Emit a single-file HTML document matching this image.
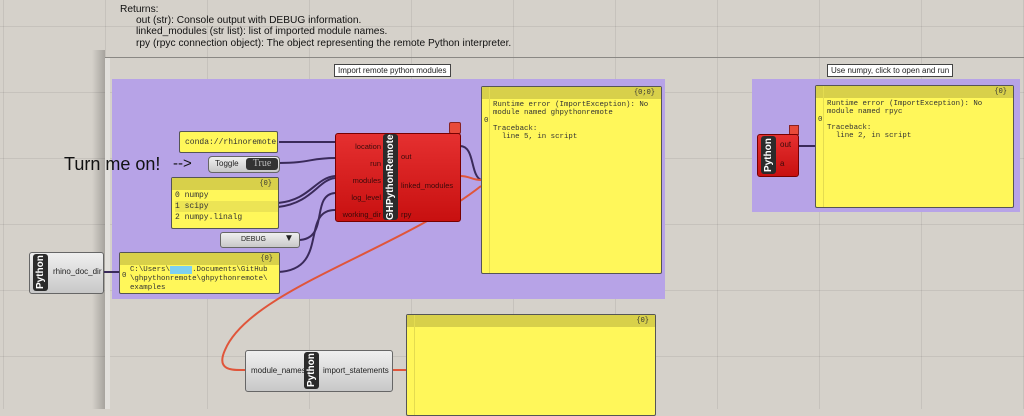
<!DOCTYPE html>
<html><head><style>
body{margin:0;width:1024px;height:409px;overflow:hidden;position:relative;background:#d5d1ca;font-family:"Liberation Sans",sans-serif;}
.abs{position:absolute;}
.grid{position:absolute;left:0;top:0;width:1024px;height:409px;
background-image:linear-gradient(90deg,rgba(0,0,0,.07) 1px,transparent 1px),linear-gradient(rgba(0,0,0,.07) 1px,transparent 1px);
background-size:102px 66px;background-position:3px 26px;}
.grp{position:absolute;background:#b7a3e7;}
.lbl{position:absolute;background:#fff;border:1px solid #444;font-size:8px;color:#222;padding:0 3px;height:11px;line-height:11px;white-space:nowrap}
.pan{position:absolute;background:#fff75a;border:1px solid #555;border-radius:2px;font-family:"Liberation Mono",monospace;font-size:7.4px;color:#333;white-space:nowrap}
.pan .hd{height:12px;background:#d8d04a;text-align:right;padding-right:6px;font-size:7px;line-height:12px}
.pan .gut{position:absolute;left:7px;top:0;bottom:0;border-left:1px solid #e4dc50}
.comp{position:absolute;background:linear-gradient(#efefef,#c8c8c8);border:1px solid #666;border-radius:3px;font-size:8px;color:#222}
.red{background:linear-gradient(#e53030,#c81010);border:1px solid #700;}
.strip{position:absolute;background:#2b2b2b;border-radius:3px;color:#fff;font-weight:bold;font-size:10px;writing-mode:vertical-rl;transform:rotate(180deg);text-align:center}
</style></head><body>
<div class="grid"></div>
<div class="abs" style="left:120px;top:4px;font-size:10.2px;line-height:11.2px;color:#111">Returns:<br>
<span style="padding-left:16px">out (str): Console output with DEBUG information.</span><br>
<span style="padding-left:16px">linked_modules (str list): list of imported module names.</span><br>
<span style="padding-left:16px">rpy (rpyc connection object): The object representing the remote Python interpreter.</span></div>
<div class="abs" style="left:92px;top:50px;width:13px;height:359px;background:linear-gradient(90deg,rgba(0,0,0,0),rgba(0,0,0,.22))"></div>
<div class="abs" style="left:105px;top:57px;width:919px;height:1px;background:#8a8884"></div>
<div class="abs" style="left:105px;top:58px;width:5px;height:351px;background:#e2e0dc"></div>

<div class="grp" style="left:112px;top:79px;width:553px;height:220px"></div>
<div class="lbl" style="left:334px;top:64px">Import remote python modules</div>
<div class="grp" style="left:752px;top:79px;width:268px;height:133px"></div>
<div class="lbl" style="left:827px;top:64px">Use numpy, click to open and run</div>
<div class="abs" style="left:64px;top:154px;font-size:18px;color:#111">Turn me on!</div>
<div class="abs" style="left:173px;top:155px;font-size:15px;color:#111">--&gt;</div>

<svg class="abs" style="left:0;top:0" width="1024" height="409">
<g fill="none" stroke="#3a2a5a" stroke-width="2">
<path d="M279 142 C310 142 310 142 335 142"/>
<path d="M279 163 C310 163 310 158 335 158"/>
<path d="M278 203 C310 200 315 178 335 176"/>
<path d="M278 207 C312 203 318 180 335 178"/>
<path d="M298 240 C330 240 310 195 335 193"/>
<path d="M278 272 C330 270 300 210 335 210"/>
<path d="M102 272 L119 272"/>
<path d="M460 146 C475 146 470 175 481 180"/>
<path d="M798 146 L815 146"/>
</g>
<g fill="none" stroke="#e0553a" stroke-width="2">
<path d="M460 176 C470 176 472 180 481 180"/>
<path d="M481 186 C400 250 250 290 225 350 C215 372 235 370 245 370"/>
<path d="M393 370 L406 370"/>
</g>
</svg>

<div class="pan" style="left:179px;top:131px;width:99px;height:22px;line-height:22px;padding-left:5px;box-sizing:border-box;font-size:8px">conda://rhinoremote</div>
<div class="comp" style="left:208px;top:156px;width:70px;height:15px;border-radius:4px">
<span class="abs" style="left:6px;top:2px">Toggle</span>
<div class="abs" style="left:37px;top:1px;width:32px;height:12px;background:#333;border-radius:3px;color:#bbb;font-family:'Liberation Serif',serif;font-size:10px;text-align:center;line-height:12px">True</div></div>
<div class="pan" style="left:171px;top:177px;width:106px;height:50px;font-size:8px"><div class="hd">{0}</div>
<div style="line-height:11px;padding-left:3px">0 numpy<br><div style="background:#ece455">1 scipy</div>2 numpy.linalg</div></div>
<div class="comp" style="left:220px;top:232px;width:78px;height:14px;font-size:7px;border-radius:3px"><span class="abs" style="left:20px;top:3px">DEBUG</span><span class="abs" style="left:63px;top:0px;font-size:10px">▼</span></div>
<div class="pan" style="left:119px;top:252px;width:159px;height:40px"><div class="hd">{0}</div>
<div class="abs" style="left:2px;top:19px">0</div>
<div class="abs" style="left:10px;top:13px;line-height:9px">C:\Users\<span style="background:#7ed0f0;color:#7ed0f0">xxxxx</span>.Documents\GitHub<br>\ghpythonremote\ghpythonremote\<br>examples</div></div>

<div class="pan" style="left:481px;top:86px;width:179px;height:186px"><div class="gut"></div><div class="hd">{0;0}</div>
<div class="abs" style="left:11px;top:14px;line-height:8px">Runtime error (ImportException): No<br>module named ghpythonremote<br><br>Traceback:<br>&nbsp;&nbsp;line 5, in script</div><div class="abs" style="left:2px;top:30px">0</div></div>
<div class="pan" style="left:815px;top:85px;width:197px;height:121px"><div class="gut"></div><div class="hd">{0}</div>
<div class="abs" style="left:11px;top:14px;line-height:8px">Runtime error (ImportException): No<br>module named rpyc<br><br>Traceback:<br>&nbsp;&nbsp;line 2, in script</div><div class="abs" style="left:2px;top:30px">0</div></div>
<div class="pan" style="left:406px;top:314px;width:248px;height:100px"><div class="gut"></div><div class="hd">{0}</div></div>

<div class="abs" style="left:449px;top:122px;width:10px;height:10px;background:#e84a3a;border:1px solid #822;border-radius:2px"></div>
<div class="comp red" style="left:335px;top:133px;width:124px;height:87px;color:#3a0a0a;font-size:7.5px">
<div class="abs" style="right:79px;top:4px;text-align:right;line-height:17px">location<br>run<br>modules<br>log_level<br>working_dir</div>
<div class="abs" style="left:65px;top:8px;line-height:29px">out<br>linked_modules<br>rpy</div></div>
<div class="strip" style="left:383px;top:134px;width:15px;height:86px;line-height:15px">GHPythonRemote</div>

<div class="abs" style="left:789px;top:125px;width:8px;height:8px;background:#e84a3a;border:1px solid #822"></div>
<div class="comp red" style="left:757px;top:134px;width:40px;height:41px;color:#3a0a0a"><span class="abs" style="left:22px;top:5px">out</span><span class="abs" style="left:22px;top:24px">a</span></div>
<div class="strip" style="left:761px;top:136px;width:15px;height:38px;line-height:15px">Python</div>

<div class="comp" style="left:29px;top:252px;width:73px;height:40px"><span class="abs" style="left:23px;top:14px;font-size:8px">rhino_doc_dir</span></div>
<div class="strip" style="left:33px;top:254px;width:15px;height:37px;line-height:15px">Python</div>

<div class="comp" style="left:245px;top:350px;width:146px;height:40px"><span class="abs" style="left:5px;top:15px">module_names</span><span class="abs" style="left:77px;top:15px">import_statements</span></div>
<div class="strip" style="left:304px;top:352px;width:15px;height:37px;line-height:15px">Python</div>
</body></html>
